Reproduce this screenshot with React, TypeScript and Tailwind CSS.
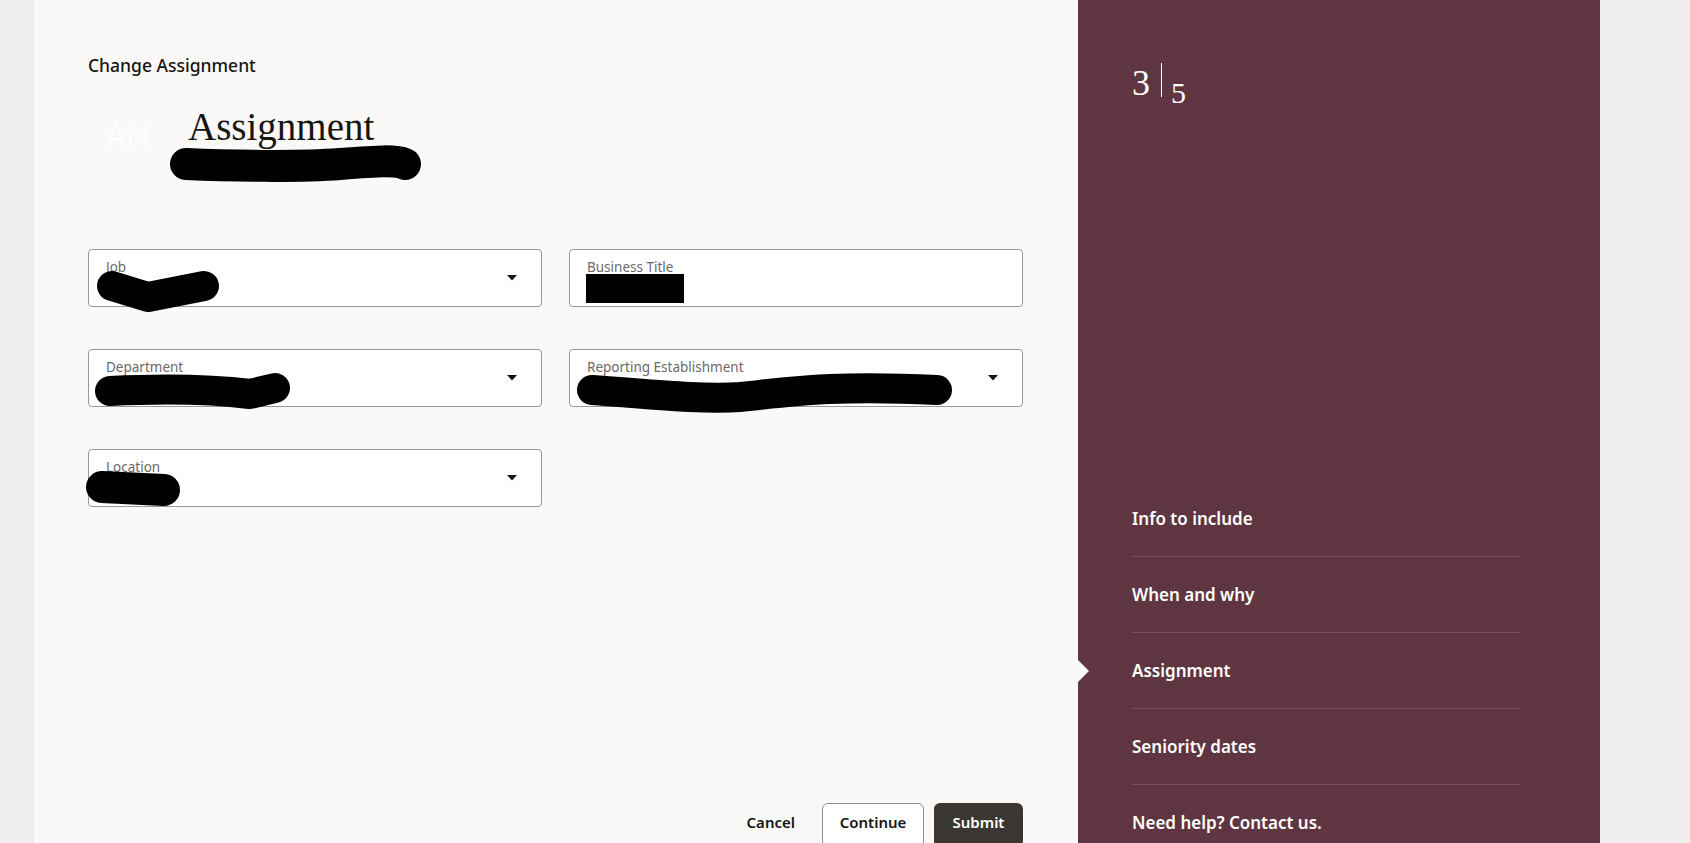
import React from "react";

const fields = [
  { label: "Job", select: true },
  { label: "Business Title", select: false },
  { label: "Department", select: true },
  { label: "Reporting Establishment", select: true },
  { label: "Location", select: true },
];

const steps = [
  "Info to include",
  "When and why",
  "Assignment",
  "Seniority dates",
  "Need help? Contact us.",
];

function Field({ label, select }: { label: string; select: boolean }) {
  return (
    <div className="flex h-[58px] items-center justify-between rounded-[4px] border border-[#9a9896] bg-white pl-[17px] pr-[24px]">
      <span className="mt-[9px] self-start text-[13.5px] leading-4 text-[#6b6966]">{label}</span>
      {select && (
        <svg width="10" height="6" viewBox="0 0 10 6" className="-mt-[1px]">
          <polygon points="0,0 10,0 5,5.5" fill="#161513" />
        </svg>
      )}
    </div>
  );
}

export default function App() {
  return (
    <div className="relative flex h-[843px] w-[1690px] overflow-hidden bg-[#f1efed] pl-[34px] font-['Noto_Sans',sans-serif] text-[#161513]">
      <main className="flex w-[1044px] shrink-0 flex-col bg-[#faf9f8] pl-[54px] pr-[55px] pt-[53px]">
        <div className="text-[17.5px] font-medium leading-6">Change Assignment</div>

        <div className="mt-[19px] flex h-20 items-start">
          <div className="flex h-20 w-20 items-center justify-center rounded-full text-[33px] font-light text-white">
            AH
          </div>
          <div className="ml-5 pt-[11px]">
            <h1 className="font-['Liberation_Serif',serif] text-[39px] leading-none">
              Assignment
            </h1>
          </div>
        </div>

        <div className="mt-[73px] grid grid-cols-2 gap-x-[27px] gap-y-[42px]">
          {fields.map((f) => (
            <Field key={f.label} label={f.label} select={f.select} />
          ))}
        </div>

        <div className="mt-[296px] flex h-11 shrink-0 items-center justify-end gap-[10px] text-[15px] font-semibold">
          <button className="h-11 px-[17px] pb-[6px]">Cancel</button>
          <button className="h-11 w-[102px] rounded-[6px] border border-[#8e8c89] bg-white pb-[6px]">
            Continue
          </button>
          <button className="h-11 w-[89px] rounded-[6px] bg-[#3a3632] pb-[6px] text-white">
            Submit
          </button>
        </div>
      </main>

      <aside className="w-[522px] shrink-0 bg-[#5e3540] pl-[54px] pt-[63px] text-white">
        <div className="flex h-10 items-start font-['Liberation_Serif',serif] leading-none">
          <span className="mt-[2px] text-[36px] leading-none">3</span>
          <span className="ml-[11px] h-[34px] w-px bg-white" />
          <span className="ml-[9px] mt-[15px] text-[30px] leading-none">5</span>
        </div>

        <nav className="mt-[378px] w-[387px]">
          {steps.map((s, i) => (
            <div
              key={s}
              className={`relative flex h-[76px] items-center text-[17px] font-semibold ${
                i < steps.length - 1 ? "border-b border-white/15" : ""
              }`}
            >
              {s === "Assignment" && (
                <span className="absolute left-[-54px] top-1/2 h-0 w-0 -translate-y-1/2 border-y-[11px] border-l-[11px] border-y-transparent border-l-[#faf9f8]" />
              )}
              {s}
            </div>
          ))}
        </nav>
      </aside>

      {/* redaction marks */}
      <svg
        className="pointer-events-none absolute left-0 top-0"
        width="1690"
        height="843"
        viewBox="0 0 1690 843"
        fill="none"
        stroke="#000"
        strokeLinecap="round"
        strokeLinejoin="round"
      >
        <path d="M186 164 C230 166 300 167 340 164 S395 160 405 164" strokeWidth="32" />
        <path d="M112 286 L148 297 L204 286" strokeWidth="30" />
        <path d="M110 391 C170 388 210 389 250 394 L275 388" strokeWidth="30" />
        <path d="M102 487 L164 490" strokeWidth="32" />
        <path d="M592 390 C640 393 700 400 740 397 C790 392 830 385 937 390" strokeWidth="30" />
        <rect x="586" y="274" width="98" height="29" fill="#000" stroke="none" />
      </svg>
    </div>
  );
}
